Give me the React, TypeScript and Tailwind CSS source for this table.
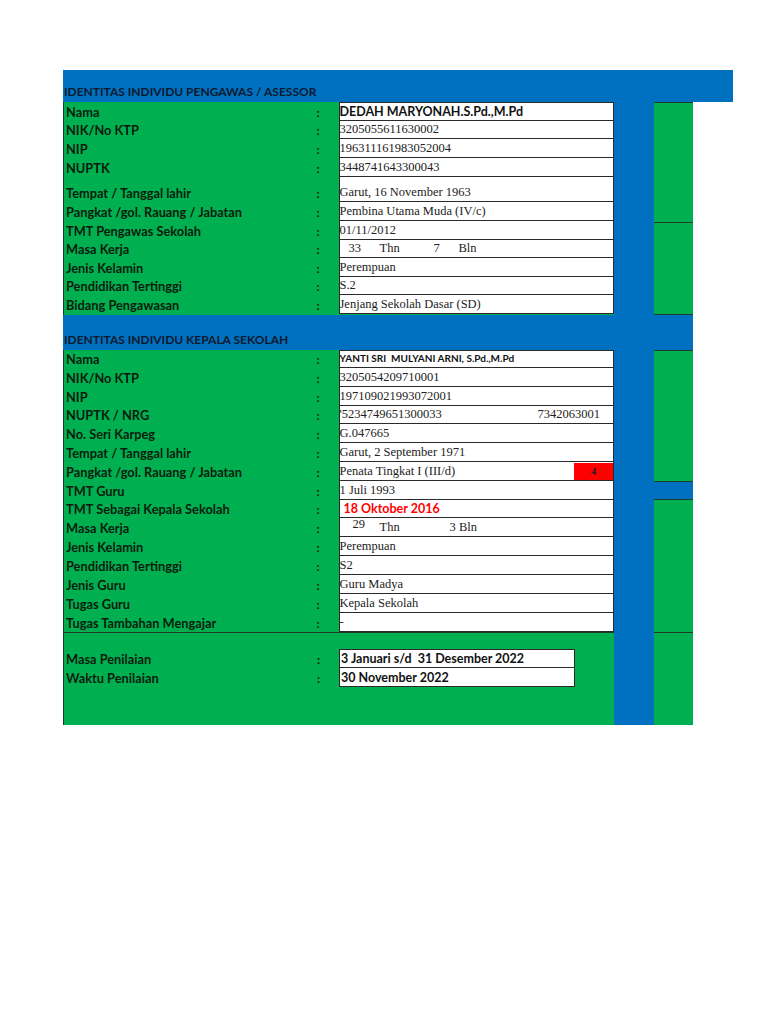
import React from 'react';

type Row = {
  label: string;
  value: React.ReactNode;
  h: number;
  variant?: 'serif' | 'name' | 'smallname' | 'red';
};

const serif = { fontFamily: '"Liberation Serif", "Times New Roman", serif' };

const pengawas: Row[] = [
  { label: 'Nama', value: 'DEDAH MARYONAH.S.Pd.,M.Pd', h: 19, variant: 'name' },
  { label: 'NIK/No KTP', value: '3205055611630002', h: 18 },
  { label: 'NIP', value: '196311161983052004', h: 19 },
  { label: 'NUPTK', value: '3448741643300043', h: 19 },
  { label: 'Tempat / Tanggal lahir', value: 'Garut, 16 November 1963', h: 25 },
  { label: 'Pangkat /gol. Rauang / Jabatan', value: 'Pembina Utama Muda (IV/c)', h: 19 },
  { label: 'TMT Pengawas Sekolah', value: '01/11/2012', h: 19 },
  {
    label: 'Masa Kerja',
    value: (
      <span className="flex w-full">
        <span className="w-[40px] pl-[9px]">33</span>
        <span className="w-[54px]">Thn</span>
        <span className="w-[25px]">7</span>
        <span>Bln</span>
      </span>
    ),
    h: 18,
  },
  { label: 'Jenis Kelamin', value: 'Perempuan', h: 19 },
  { label: 'Pendidikan Tertinggi', value: 'S.2', h: 18 },
  { label: 'Bidang Pengawasan', value: 'Jenjang Sekolah Dasar (SD)', h: 19 },
];

const kepsek: Row[] = [
  { label: 'Nama', value: 'YANTI SRI  MULYANI ARNI, S.Pd.,M.Pd', h: 18, variant: 'smallname' },
  { label: 'NIK/No KTP', value: '3205054209710001', h: 19 },
  { label: 'NIP', value: '197109021993072001', h: 19 },
  {
    label: 'NUPTK / NRG',
    value: (
      <span className="flex w-full">
        <span className="w-[198px]">'5234749651300033</span>
        <span>7342063001</span>
      </span>
    ),
    h: 18,
  },
  { label: 'No. Seri Karpeg', value: 'G.047665', h: 19 },
  { label: 'Tempat / Tanggal lahir', value: 'Garut, 2 September 1971', h: 19 },
  { label: 'Pangkat /gol. Rauang / Jabatan', value: 'Penata Tingkat I (III/d)', h: 19 },
  { label: 'TMT Guru', value: '1 Juli 1993', h: 19 },
  { label: 'TMT Sebagai Kepala Sekolah', value: '18 Oktober 2016', h: 18, variant: 'red' },
  {
    label: 'Masa Kerja',
    value: (
      <span className="flex w-full">
        <span className="w-[40px] pl-[13px] -translate-y-[3px]">29</span>
        <span className="w-[70px]">Thn</span>
        <span>3 Bln</span>
      </span>
    ),
    h: 19,
  },
  { label: 'Jenis Kelamin', value: 'Perempuan', h: 19 },
  { label: 'Pendidikan Tertinggi', value: 'S2', h: 19 },
  { label: 'Jenis Guru', value: 'Guru Madya', h: 19 },
  { label: 'Tugas Guru', value: 'Kepala Sekolah', h: 19 },
  { label: 'Tugas Tambahan Mengajar', value: '-', h: 19 },
];

const labelCls =
  'w-[246px] pl-[2px] flex items-end text-[12.8px] font-bold text-[#0a1c0e] leading-[15px] pb-[1px] whitespace-nowrap';
const colonCls = 'w-[29px] pl-[7px] flex items-end text-[12px] font-bold text-[#0a1c0e] leading-[15px] pb-[1px]';

const DataRow: React.FC<{ row: Row; first?: boolean; badge?: boolean }> = ({ row, first, badge }) => {
  const valueClass =
    row.variant === 'name'
      ? 'text-[12.5px] font-bold text-[#111]'
      : row.variant === 'smallname'
        ? 'text-[10px] font-bold text-[#111] whitespace-pre'
        : row.variant === 'red'
          ? 'text-[12.5px] font-bold text-[#ff0000] pl-[4px]'
          : 'text-[12.5px] text-[#222]';
  const isSerif = !row.variant;
  return (
    <div className="flex" style={{ height: row.h }}>
      <div className={labelCls}>{row.label}</div>
      <div className={colonCls}>:</div>
      <div
        className={`w-[276px] bg-white border-x border-b border-[#2a2a2a] flex items-end leading-[15px] pb-[1px] ${first ? 'border-t' : ''}`}
      >
        <div className={`flex-1 flex ${valueClass}`} style={isSerif ? serif : undefined}>
          {row.value}
        </div>
        {badge && (
          <div
            className="w-[39px] h-full -mb-[1px] bg-[#ff0000] flex items-center justify-center text-[10px] font-bold text-[#222]"
            style={serif}
          >
            4
          </div>
        )}
      </div>
    </div>
  );
};

const App: React.FC = () => {
  return (
    <div className="w-[768px] h-[1024px] bg-white pt-[70px] pl-[63px]" style={{ fontFamily: 'Lato, "Open Sans", sans-serif' }}>
      {/* header band */}
      <div className="w-[670px] h-[32px] bg-[#0070c0] flex items-end pl-[1px] pb-[1px] text-[12px] font-bold text-[#0d1a2e]">
        IDENTITAS INDIVIDU PENGAWAS / ASESSOR
      </div>

      {/* pengawas section */}
      <div className="flex">
        <div className="w-[551px] bg-[#00b050] border-l border-[#1d3d2a]">
          {pengawas.map((r, i) => (
            <DataRow key={r.label} row={r} first={i === 0} />
          ))}
        </div>
        <div className="w-[40px] bg-[#0070c0]" />
        <div className="w-[39px] flex flex-col">
          <div className="h-[120px] bg-[#00b050] border-t border-[#1d3d2a]" />
          <div className="h-[93px] bg-[#00b050] border-t border-b border-[#1d3d2a]" />
        </div>
      </div>

      {/* second band */}
      <div className="w-[630px] h-[35px] bg-[#0070c0] flex items-end pl-[1px] pb-[1px] text-[12px] font-bold text-[#0d1a2e]">
        IDENTITAS INDIVIDU KEPALA SEKOLAH
      </div>

      {/* kepala sekolah section */}
      <div className="flex">
        <div className="w-[551px] bg-[#00b050] border-l border-[#1d3d2a]">
          {kepsek.map((r, i) => (
            <DataRow key={r.label} row={r} first={i === 0} badge={r.label.startsWith('Pangkat')} />
          ))}
        </div>
        <div className="w-[40px] bg-[#0070c0]" />
        <div className="w-[39px] flex flex-col">
          <div className="h-[131px] bg-[#00b050] border-t border-[#1d3d2a]" />
          <div className="h-[19px] bg-[#0070c0] border-t border-b border-[#1d3d2a]" />
          <div className="flex-1 bg-[#00b050]" />
        </div>
      </div>

      {/* penilaian section */}
      <div className="flex h-[93px]">
        <div className="w-[551px] bg-[#00b050] border-t border-l border-[#1d3d2a] pt-[16px]">
          {[
            ['Masa Penilaian', '3 Januari s/d  31 Desember 2022'],
            ['Waktu Penilaian', '30 November 2022'],
          ].map(([label, value], i) => (
            <div key={label} className="flex h-[19px]">
              <div className={labelCls}>{label}</div>
              <div className={colonCls}>:</div>
              <div
                className={`w-[236px] bg-white border-x border-b border-[#2a2a2a] flex items-end pl-[1px] pb-[1px] leading-[15px] text-[12.5px] font-bold text-[#111] whitespace-pre ${i === 0 ? 'border-t' : ''}`}
              >
                {value}
              </div>
            </div>
          ))}
        </div>
        <div className="w-[40px] bg-[#0070c0]" />
        <div className="w-[39px] bg-[#00b050] border-t border-[#1d3d2a]" />
      </div>
    </div>
  );
};

export default App;
